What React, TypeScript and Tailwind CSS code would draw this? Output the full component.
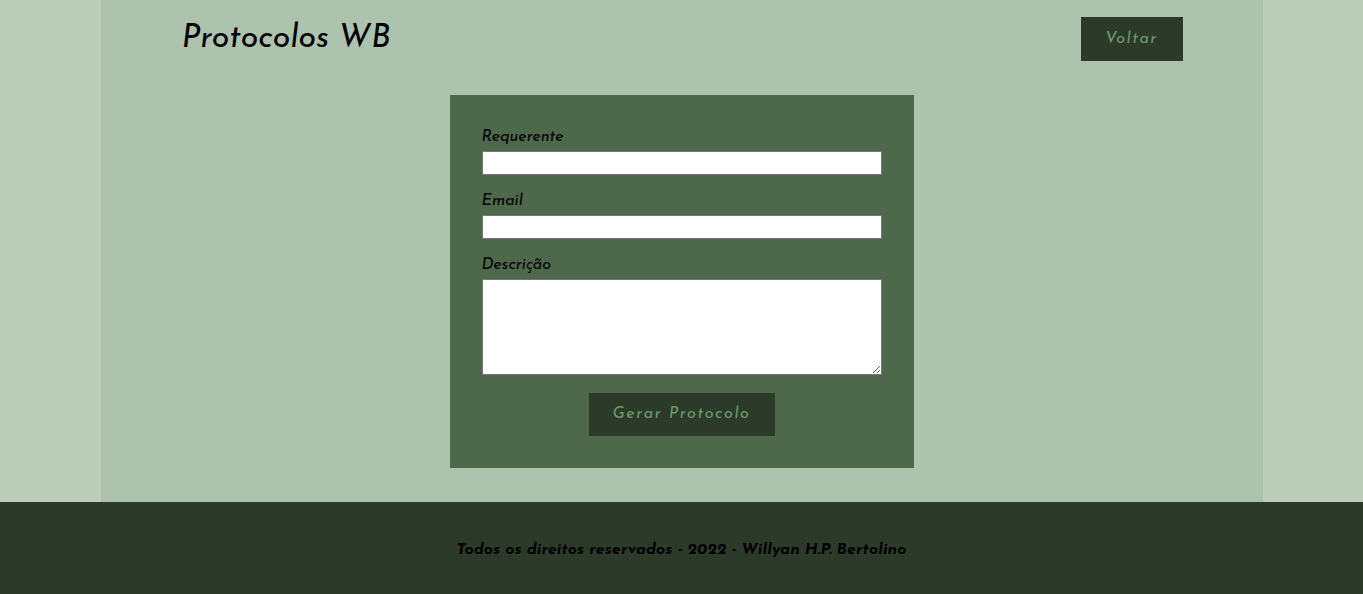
import React from "react";

export default function App() {
  const font = { fontFamily: "'Josefin Sans', Lato, 'Liberation Sans', sans-serif" };
  return (
    <div className="min-h-[594px] bg-[#bccdb9] flex flex-col" style={font}>
      <main className="mx-auto w-[1162px] h-[502px] bg-[#adc3ad] flex flex-col">
        <header className="flex items-start justify-between pl-[81px] pr-[80px] pt-[17px]">
          <h1 className="text-[32px] italic text-black leading-[44px] mt-[0px]">Protocolos WB</h1>
          <button className="w-[102px] h-[44px] bg-[#2c3a2a] text-[#6b9a6b] italic text-[16px] tracking-[1.5px]">
            Voltar
          </button>
        </header>
        <div className="flex justify-center mt-[34px]">
          <form className="w-[464px] bg-[#4e684b] px-8 pt-[30px] pb-8 flex flex-col">
            <label className="italic text-black text-[16px] leading-[24px] mb-[2px]">Requerente</label>
            <input className="h-[24px] w-[400px] bg-white border border-[#767676] mb-[14px]" />
            <label className="italic text-black text-[16px] leading-[24px] mb-[2px]">Email</label>
            <input className="h-[24px] w-[400px] bg-white border border-[#767676] mb-[14px]" />
            <label className="italic text-black text-[16px] leading-[24px] mb-[2px]">Descrição</label>
            <textarea className="h-[96px] w-[400px] bg-white border border-[#767676] block" />
            <div className="flex justify-center mt-[18px]">
              <button type="button" className="w-[186px] h-[43px] bg-[#2c3a2a] text-[#6b9a6b] italic text-[16px] tracking-[1.6px] pb-[2px]">
                Gerar Protocolo
              </button>
            </div>
          </form>
        </div>
      </main>
      <footer className="h-[92px] bg-[#2c3a2a] flex items-center justify-center">
        <p className="italic font-bold text-black text-[16px] tracking-[0.1px] mt-[3px]">
          Todos os direitos reservados - 2022 - Willyan H.P. Bertolino
        </p>
      </footer>
    </div>
  );
}
